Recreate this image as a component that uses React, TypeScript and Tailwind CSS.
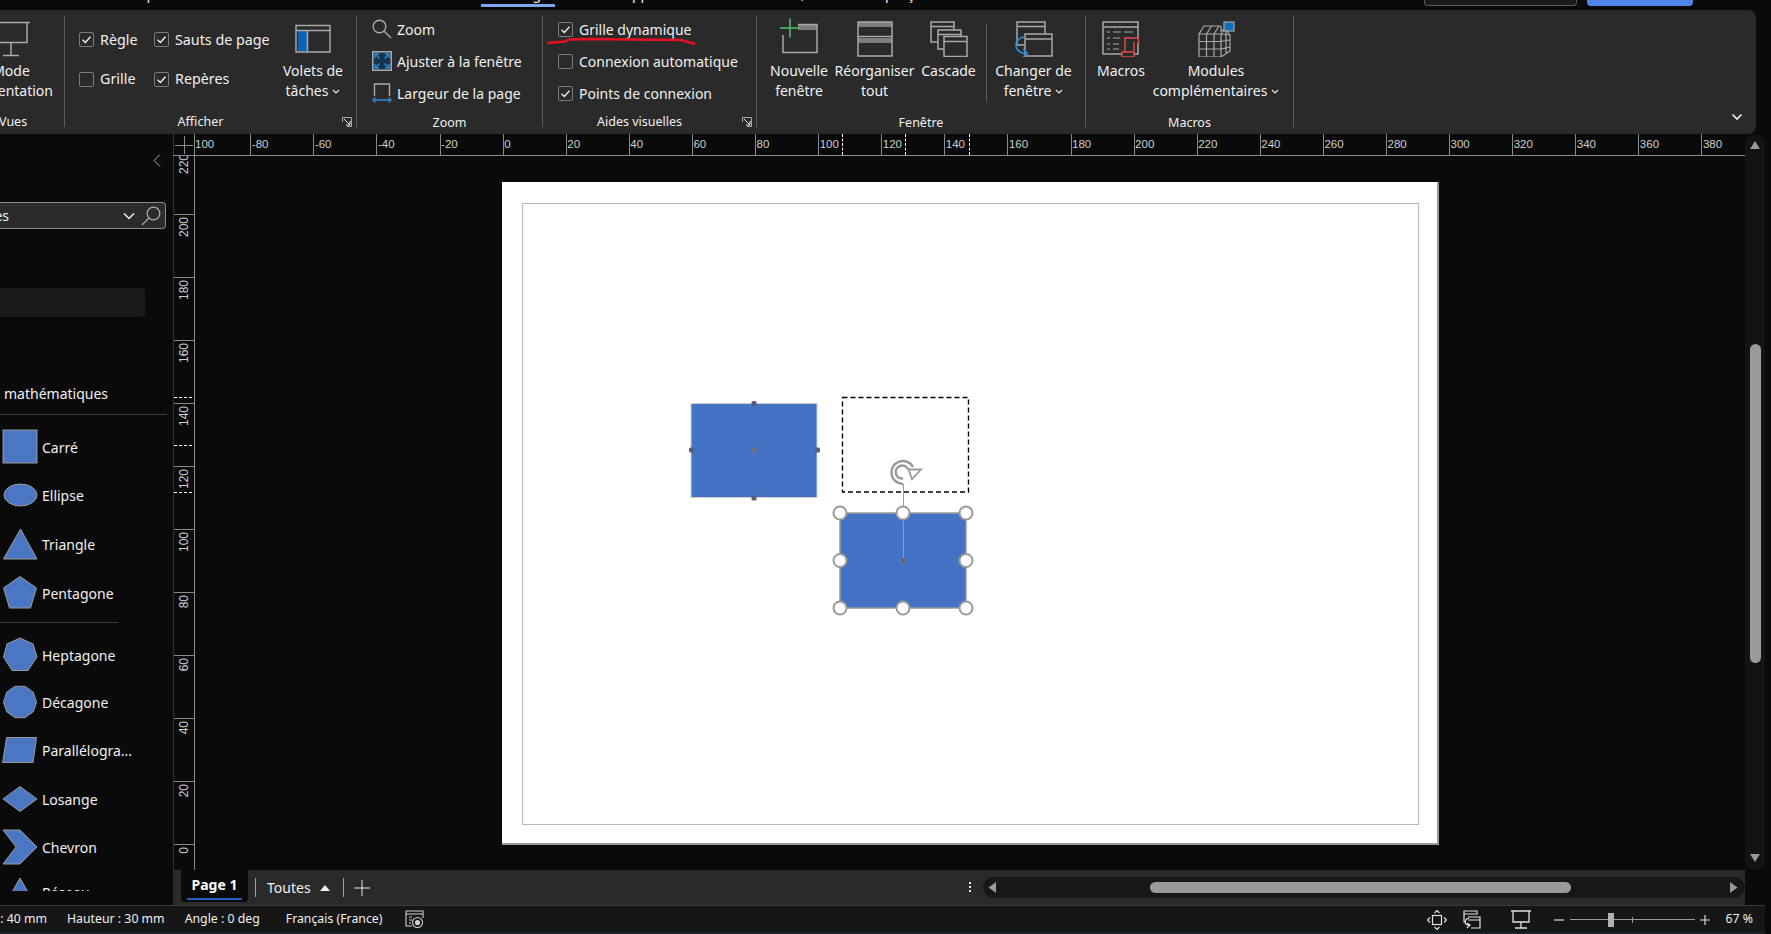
import React from 'react';

const GREY = '#a9a9a9';
const BLUE = '#2f8ad6';

const Chevron = () => (
  <svg width="8" height="5" viewBox="0 0 8 5" className="inline-block ml-[4px] mb-[2px]">
    <path d="M1 1l3 3 3-3" fill="none" stroke="#e8e8e8" strokeWidth="1.2" />
  </svg>
);

const Check = ({ on }: { on: boolean }) => (
  <div className="w-[15px] h-[15px] flex-none rounded-[2px] border border-[#7c7c7c] flex items-center justify-center">
    {on && (
      <svg width="11" height="11" viewBox="0 0 11 11">
        <path d="M1.5 5.8l2.8 2.6 5.2-5.6" fill="none" stroke="#f2f2f2" strokeWidth="1.4" />
      </svg>
    )}
  </div>
);

const CheckRow = ({ on, label }: { on: boolean; label: string }) => (
  <div className="flex items-center gap-[6px] whitespace-nowrap">
    <Check on={on} />
    <span>{label}</span>
  </div>
);

const Launcher = () => (
  <svg width="10" height="10" viewBox="0 0 10 10" className="absolute right-[4px] bottom-[0px]">
    <path d="M.5 5V.5H9.5V9.5H5" fill="none" stroke={GREY} strokeWidth="1" />
    <path d="M2 2l6 6M8 4v4H4" fill="none" stroke="#e8e8e8" strokeWidth="1" />
  </svg>
);

const Group = ({ width, label, launcher, labelClass, children }: { width: string; label: string; launcher?: boolean; labelClass?: string; children: React.ReactNode }) => (
  <div className={`${width} relative flex-none flex flex-col h-[111px] mt-[6px] border-r border-[#5c5c5c]`}>
    <div className="h-[99px] flex">{children}</div>
    <div className={`h-[12px] leading-[14px] text-[12.5px] text-center whitespace-nowrap ${labelClass ?? ''}`}>{label}</div>
    {launcher && <Launcher />}
  </div>
);

const BigButton = ({ width, icon, lines, caret }: { width: string; icon: React.ReactNode; lines: string[]; caret?: boolean }) => (
  <div className={`${width} flex-none flex flex-col items-center`}>
    <div className="h-[45px] flex items-center justify-center">{icon}</div>
    {lines.map((l, i) => (
      <div key={l} className="h-[20px] leading-[20px] whitespace-nowrap">
        {l}
        {caret && i === lines.length - 1 && <Chevron />}
      </div>
    ))}
  </div>
);

const ModeIcon = () => (
  <svg width="38" height="36" viewBox="0 0 38 36" fill="none" stroke={GREY} strokeWidth="1.5">
    <path d="M0 1.5H38M35 1.5V21.5H0M19 21.5V34M11 34.5H27" />
  </svg>
);

const PanesIcon = () => (
  <svg width="36" height="36" viewBox="0 0 36 36" fill="none">
    <rect x="3" y="10" width="9" height="20" fill="#0f62b5" />
    <path d="M1 4.5H35V31H1ZM1 9.5H35M12.5 9.5V31" stroke={GREY} strokeWidth="1.5" />
  </svg>
);

const SearchIcon = () => (
  <svg width="20" height="20" viewBox="0 0 20 20" fill="none" stroke={GREY} strokeWidth="1.4">
    <circle cx="7.5" cy="7.5" r="6.3" />
    <path d="M12 12l7 7" />
  </svg>
);

const FitIcon = () => (
  <svg width="20" height="20" viewBox="0 0 20 20" fill="none">
    <rect x=".75" y=".75" width="18.5" height="18.5" fill="#17344f" stroke={GREY} strokeWidth="1.5" />
    <path d="M3 3l4.5 4.5M3 7V3h4M17 3l-4.5 4.5M17 7V3h-4M3 17l4.5-4.5M3 13v4h4M17 17l-4.5-4.5M17 13v4h-4" stroke={BLUE} strokeWidth="1.4" />
  </svg>
);

const WidthIcon = () => (
  <svg width="20" height="20" viewBox="0 0 20 20" fill="none">
    <path d="M2.5 13V1H17.5V13" stroke={GREY} strokeWidth="1.4" />
    <path d="M.5 17H19.5M3.5 14.5L1 17l2.5 2.5M16.500 14.500L19 17l-2.500 2.500" stroke={BLUE} strokeWidth="1.3" />
  </svg>
);

const NewWindowIcon = () => (
  <svg width="38" height="36" viewBox="0 0 38 36" fill="none" className="overflow-visible">
    <rect x="18" y="3.500" width="19" height="5.500" fill="#7d7d7d" />
    <path d="M3 14V31.500H37V3.500H18" stroke={GREY} strokeWidth="1.5" />
    <path d="M10 -2.500V16.500M0 7H19" stroke="#4fc36b" strokeWidth="1.5" />
  </svg>
);

const ArrangeIcon = () => (
  <svg width="36" height="36" viewBox="0 0 36 36" fill="none">
    <rect x="1" y="1" width="34" height="5" fill="#7d7d7d" />
    <rect x="1" y="17" width="34" height="5" fill="#7d7d7d" />
    <path d="M1 1H35V35H1ZM1 15.500H35" stroke={GREY} strokeWidth="1.5" />
  </svg>
);

const CascadeIcon = () => (
  <svg width="38" height="36" viewBox="0 0 38 36" fill="none" stroke={GREY} strokeWidth="1.5">
    <path d="M1 1H24V21H1ZM1 5.500H24" fill="#2a2a2a" />
    <path d="M8 9H31V28H8ZM8 13.500H31" fill="#2a2a2a" />
    <path d="M14 15.500H37V35.500H14ZM14 20.500H37" fill="#2a2a2a" />
  </svg>
);

const SwitchIcon = () => (
  <svg width="38" height="36" viewBox="0 0 38 36" fill="none">
    <path d="M2 1H30V24H2ZM2 5.500H30" stroke={GREY} strokeWidth="1.5" fill="#2a2a2a" />
    <path d="M10 13H37V35H10ZM10 18H37" stroke={GREY} strokeWidth="1.5" fill="#2a2a2a" />
    <path d="M9 16C3 17 -1 22 2 28C4 31 7 32.500 12 32.500M8 28l4.500 4.500L8 36" stroke={BLUE} strokeWidth="1.5" />
  </svg>
);

const MacroIcon = () => (
  <svg width="38" height="36" viewBox="0 0 38 36" fill="none">
    <path d="M1 1H36V33H1ZM1 6H36" stroke={GREY} strokeWidth="1.5" />
    <path d="M5 11h3M11 11h8M22 11h9M5 17h3M11 17h7M5 23h3M11 23h6M5 28h3M11 28h6" stroke={GREY} strokeWidth="1" />
    <path d="M22 17H36L37 22M23 17V31M20 31H32V36H20ZM32 21V31" stroke="#e24b4b" strokeWidth="1.4" fill="#2a2a2a" />
  </svg>
);

const ModulesIcon = () => (
  <svg width="38" height="36" viewBox="0 0 38 36" fill="none" stroke={GREY} strokeWidth="1.2">
    <path d="M2 13H24V36H2ZM2 20.500H24M2 28H24M9.500 13V36M17 13V36" />
    <path d="M2 13l5-8H24M24 36l9-6V14l-9-1M24 13l3-4M9.500 13l5-8M17 13l5-8M24 5v6M33 14l-4-5H24M24 20l9-1M24 28l9-2M29 9V33" />
    <rect x="27" y="1" width="10" height="9" fill="#0f6cbd" />
  </svg>
);

const shapes = [
  { name: 'Carré', mt: 'mt-[10px]', draw: <rect x="1" y="1" width="34" height="33" /> },
  { name: 'Ellipse', mt: 'mt-[4px]', draw: <ellipse cx="18.500" cy="18" rx="16.500" ry="11" /> },
  { name: 'Triangle', mt: 'mt-[5px]', draw: <polygon points="18.500,3 35,33 1.500,33" /> },
  { name: 'Pentagone', mt: 'mt-[5px]', draw: <polygon points="18,1.500 34.500,13 28.500,33 7.500,33 1.500,13" /> },
  { name: 'Heptagone', mt: 'mt-[10px]', draw: <polygon points="18,1 31,7 35,20 26,33.500 10,33.500 1.500,20 5,7" /> },
  { name: 'Décagone', mt: 'mt-[3px]', draw: <polygon points="12.900,2.300 23.100,2.300 31.300,8.300 34.500,18 31.300,27.700 23.100,33.700 12.900,33.700 4.700,27.700 1.500,18 4.700,8.300" /> },
  { name: 'Parallélogra...', mt: 'mt-[4px]', draw: <polygon points="4.600,5.500 34.500,5.500 31,30.500 .6,30.500" /> },
  { name: 'Losange', mt: 'mt-[5px]', draw: <polygon points="1,18 18,5.500 35,18 18,30.500" /> },
  { name: 'Chevron', mt: 'mt-[4px]', draw: <polygon points="1,1 18,1 35,18 18,35 1,35 14,18" /> },
  { name: 'Réseau', mt: 'mt-[1px]', draw: <polygon points="18,4 35,34 1,34" /> },
];

const hLabels = ['-80', '-60', '-40', '-20', '0', '20', '40', '60', '80', '100', '120', '140', '160', '180', '200', '220', '240', '260', '280', '300', '320', '340', '360', '380'];
const vLabels = ['200', '180', '160', '140', '120', '100', '80', '60', '40', '20'];
const handles = [
  [840, 513], [903, 513], [966, 513], [840, 560.5], [966, 560.5], [840, 608], [903, 608], [966, 608],
];
const pins = [
  [754, 403.5], [691.5, 450], [817.5, 450], [754, 498],
];

const VLabel = ({ children }: { children: string }) => (
  <span className="[writing-mode:vertical-rl] rotate-180 mt-[2px] text-[12px] leading-[12px] font-['Liberation_Sans',sans-serif] text-[#cfcfcf]">{children}</span>
);

const Triangle = ({ dir }: { dir: 'up' | 'down' | 'left' | 'right' }) => (
  <>
    {dir === 'up' && <svg width="12" height="10" viewBox="0 0 12 10"><path d="M6 1l5 8H1z" fill="#9a9a9a" /></svg>}
    {dir === 'down' && <svg width="12" height="10" viewBox="0 0 12 10"><path d="M6 9l5-8H1z" fill="#9a9a9a" /></svg>}
    {dir === 'left' && <svg width="8" height="11" viewBox="0 0 8 11"><path d="M.5 5.500L8 0v11z" fill="#9a9a9a" /></svg>}
    {dir === 'right' && <svg width="8" height="11" viewBox="0 0 8 11"><path d="M7.500 5.500L0 0v11z" fill="#9a9a9a" /></svg>}
  </>
);

export default function App() {
  return (
    <div className="w-[1771px] h-[934px] overflow-hidden bg-[#0a0a0a] text-[#f0f0f0] text-[14px] font-['Noto_Sans',sans-serif]">
      {/* only the bottoms of the tab labels are visible */}
      <div className="h-[10px] flex items-start overflow-hidden">
        <span className="ml-[126px] -mt-[14px] leading-[16px] w-[355px] flex-none">Disposition</span>
        <div className="relative w-[74px] flex-none">
          <div className="-mt-[14px] leading-[16px] text-center">Affichage</div>
          <div className="absolute top-[4px] left-0 right-0 h-[3px] bg-[#7ba7ee]" />
        </div>
        <span className="ml-[68px] -mt-[14px] leading-[16px] w-[110px] flex-none">Applications</span>
        <span className="ml-[20px] -mt-[14px] leading-[16px] w-[100px] flex-none">Macros,</span>
        <span className="ml-[23px] -mt-[14px] leading-[16px] w-[100px] flex-none">Aperçu</span>
        <div className="ml-auto w-[153px] h-[6px] rounded-b-[4px] border border-t-0 border-[#5a5a5a] bg-[#1a1a1a]" />
        <div className="ml-[10px] mr-[78px] w-[106px] h-[6px] rounded-b-[4px] bg-[#4f85e8]" />
      </div>

      {/* ribbon */}
      <div className="relative w-[1756px] h-[124px] bg-[#2a2a2a] rounded-r-[8px] flex overflow-hidden">
        <Group width="w-[65px]" label="Vues" labelClass="w-[20px] -ml-[1px]">
          <div className="-ml-[29px]">
            <BigButton width="w-[80px]" icon={<ModeIcon />} lines={['Mode', 'présentation']} />
          </div>
        </Group>

        <Group width="w-[292px]" label="Afficher" launcher labelClass="pr-[20px]">
          <div className="ml-[14px] w-[198px] pt-[4px] grid grid-cols-[75px_1fr] grid-rows-[39px_40px] items-center text-[14.300px]">
            <CheckRow on label="Règle" />
            <CheckRow on label="Sauts de page" />
            <CheckRow on={false} label="Grille" />
            <CheckRow on label="Repères" />
          </div>
          <BigButton width="w-[72px]" icon={<PanesIcon />} lines={['Volets de', 'tâches']} caret />
        </Group>

        <Group width="w-[186px]" label="Zoom" labelClass="pt-[1px]">
          <div className="ml-[15px] -mt-[1px] flex flex-col gap-[4px] whitespace-nowrap">
            <div className="h-[28px] flex items-center gap-[5px]"><SearchIcon /><span>Zoom</span></div>
            <div className="h-[28px] flex items-center gap-[5px]"><FitIcon /><span>Ajuster à la fenêtre</span></div>
            <div className="h-[28px] flex items-center gap-[5px]"><WidthIcon /><span>Largeur de la page</span></div>
          </div>
        </Group>

        <Group width="w-[214px]" label="Aides visuelles" launcher labelClass="pr-[20px]">
          <div className="ml-[15px] -mt-[1px] flex flex-col gap-[4px]">
            <div className="h-[28px] flex items-center"><CheckRow on label="Grille dynamique" /></div>
            <div className="h-[28px] flex items-center"><CheckRow on={false} label="Connexion automatique" /></div>
            <div className="h-[28px] flex items-center"><CheckRow on label="Points de connexion" /></div>
          </div>
        </Group>

        <Group width="w-[329px]" label="Fenêtre" labelClass="pt-[1px]">
          <BigButton width="w-[84px]" icon={<NewWindowIcon />} lines={['Nouvelle', 'fenêtre']} />
          <BigButton width="w-[67px]" icon={<ArrangeIcon />} lines={['Réorganiser', 'tout']} />
          <BigButton width="w-[78px] pl-[3px]" icon={<CascadeIcon />} lines={['Cascade']} />
          <div className="w-px h-[79px] mt-[7px] bg-[#5c5c5c] flex-none" />
          <BigButton width="w-[93px]" icon={<SwitchIcon />} lines={['Changer de', 'fenêtre']} caret />
        </Group>

        <Group width="w-[208px]" label="Macros" labelClass="pt-[1px]">
          <BigButton width="w-[70px]" icon={<MacroIcon />} lines={['Macros']} />
          <BigButton width="w-[120px]" icon={<ModulesIcon />} lines={['Modules', 'complémentaires']} caret />
        </Group>

        <svg width="12" height="8" viewBox="0 0 12 8" className="absolute left-[1731px] top-[103px]">
          <path d="M1.500 1.500L6 6l4.500-4.500" fill="none" stroke="#f0f0f0" strokeWidth="1.600" />
        </svg>
        {/* red hand-drawn underline */}
        <svg width="150" height="12" viewBox="0 0 150 12" className="absolute left-[547px] top-[25px]">
          <path d="M0 8L18 6.500L22 4.500L48 4L80 4.500L134 5L148 9" fill="none" stroke="#e81123" strokeWidth="2.500" />
        </svg>
      </div>

      <div className="w-[1765px] h-[771px] flex">
        {/* stencil panel */}
        <div className="w-[173px] flex-none flex flex-col overflow-hidden">
          <svg width="8" height="13" viewBox="0 0 8 13" className="mt-[20px] ml-[153px] flex-none">
            <path d="M7 .5L1 6.500l6 6" fill="none" stroke={GREY} strokeWidth="1" />
          </svg>
          <div className="mt-[35px] w-[166px] h-[27px] flex-none flex items-center rounded-r-[4px] border border-l-0 border-[#8a8a8a] bg-[#2b2b2b]">
            <div className="w-[9px] flex justify-end overflow-hidden"><span>Formes</span></div>
            <svg width="12" height="8" viewBox="0 0 12 8" className="ml-[114px]">
              <path d="M1 1.500L6 6.500l5-5" fill="none" stroke="#f0f0f0" strokeWidth="1.500" />
            </svg>
            <svg width="20" height="20" viewBox="0 0 20 20" className="ml-[6px]" fill="none" stroke={GREY} strokeWidth="1.300">
              <circle cx="12.500" cy="7.500" r="6.300" />
              <path d="M8 12l-7 7" />
            </svg>
          </div>
          <div className="mt-[59px] w-[145px] h-[29px] flex-none bg-[#1a1a1a] rounded-r-[3px]" />
          <div className="mt-[67px] ml-[4px] h-[20px] leading-[20px] flex-none">mathématiques</div>
          <div className="mt-[10px] w-[167px] h-px flex-none bg-[#3c3c3c]" />
          <div className="h-[476px] flex-none overflow-hidden">
            {shapes.map((s, i) => (
              <React.Fragment key={s.name}>
                {i === 4 && <div className="mt-[7px] w-[118px] h-px bg-[#3c3c3c]" />}
                <div className={`${s.mt} h-[44px] pl-[2px] flex items-center gap-[4px]`}>
                  <svg width="36" height="36" viewBox="0 0 36 36" fill="#4a76c4" stroke="#9a9a9a" strokeWidth="1" className="flex-none">{s.draw}</svg>
                  <span className="whitespace-nowrap">{s.name}</span>
                </div>
              </React.Fragment>
            ))}
          </div>
        </div>

        <div className="w-[1572px] flex-none flex flex-col">
          {/* horizontal ruler */}
          <div className="h-[22px] flex-none flex border-b border-[#8a8a8a]">
            <div className="w-[22px] flex-none border-l border-r border-l-[#333333] border-r-[#8a8a8a] flex items-center justify-center">
              <svg width="18" height="19" viewBox="0 0 18 19"><path d="M0 10.500H18M9.500 1V19" stroke="#8a8a8a" strokeWidth="1" /></svg>
            </div>
            <div className="relative flex-1 flex overflow-hidden font-['Liberation_Sans',sans-serif] text-[11.500px] text-[#cfcfcf]">
              <div className="w-[55.300px] flex-none leading-[20px]">100</div>
              {hLabels.map((l) => (
                <div key={l} className="w-[63.100px] flex-none border-l border-[#8a8a8a] pl-[0.500px] leading-[20px]">{l}</div>
              ))}
              <div className="absolute left-[647px] top-0 h-full border-l border-dashed border-white" />
              <div className="absolute left-[710px] top-0 h-full border-l border-dashed border-white" />
              <div className="absolute left-[774px] top-0 h-full border-l border-dashed border-white" />
            </div>
          </div>

          <div className="flex-1 flex min-h-0">
            {/* vertical ruler */}
            <div className="relative w-[22px] flex-none flex flex-col border-l border-r border-l-[#333333] border-r-[#8a8a8a]">
              <div className="h-[58px] flex-none flex justify-center items-start overflow-hidden"><div className="-mt-[4px] flex items-start"><VLabel>220</VLabel></div></div>
              {vLabels.map((l) => (
                <div key={l} className="h-[63px] flex-none border-t border-[#8a8a8a] flex justify-center items-start"><VLabel>{l}</VLabel></div>
              ))}
              <div className="h-[25px] flex-none border-t border-[#8a8a8a] flex justify-center items-start"><VLabel>0</VLabel></div>
              <div className="absolute left-0 top-[241px] w-[18px] border-t border-dashed border-white" />
              <div className="absolute left-0 top-[289px] w-[18px] border-t border-dashed border-white" />
              <div className="absolute left-0 top-[336px] w-[18px] border-t border-dashed border-white" />
            </div>

            {/* drawing page */}
            <div className="flex-1 overflow-hidden">
              <div className="relative ml-[307px] mt-[26px] w-[937px] h-[663px] bg-white border-r-2 border-b-2 border-[#9a9a9a] pt-[21px] pl-[20px]">
                <div className="w-[897px] h-[622px] border border-[#b8b8b8]" />
                <svg width="937" height="663" viewBox="502 182 937 663" className="absolute left-0 top-0">
                  <rect x="691" y="403.500" width="126" height="94" fill="#4472c4" stroke="#cfcfcf" strokeWidth="1" />
                  {pins.map(([x, y]) => (
                    <rect key={`${x}-${y}`} x={x - 2.5} y={y - 2.5} width="5" height="5" rx="1.500" fill="#5c5c72" />
                  ))}
                  <rect x="751.500" y="447.500" width="5" height="5" fill="#6e6e7c" />
                  <rect x="842.500" y="397.500" width="126" height="94.500" fill="none" stroke="#000000" strokeWidth="1.400" strokeDasharray="5 3" />
                  <rect x="840" y="513" width="126" height="95" fill="#4472c4" stroke="#9a9a9a" strokeWidth="1.500" />
                  <path d="M903.500 484V560" stroke="#9a9a9a" strokeWidth="1" />
                  <rect x="901" y="558" width="5" height="5" rx="1" fill="#5c5c72" stroke="#9a9a9a" strokeWidth=".5" />
                  {handles.map(([x, y]) => (
                    <circle key={`${x}-${y}`} cx={x} cy={y} r="6.500" fill="white" stroke="#9a9a9a" strokeWidth="2" />
                  ))}
                  <path d="M913 467A11.500 11.500 0 1 0 903 484M908 469A6.500 6.500 0 1 0 903 478.500" fill="none" stroke="#9a9a9a" strokeWidth="2.500" />
                  <path d="M908.500 469.500H921L912 479L908.500 469.500Z" fill="white" stroke="#9a9a9a" strokeWidth="1.800" />
                </svg>
              </div>
            </div>
          </div>

          {/* page tabs */}
          <div className="h-[35px] flex-none flex items-start bg-[#2a2a2a]">
            <div className="ml-[8px] w-[67px] h-[32px] flex-none bg-[#0a0a0a] rounded-b-[4px] flex flex-col items-center">
              <div className="h-[28px] leading-[30px] font-bold text-white text-[14px]">Page 1</div>
              <div className="w-[55px] h-[2px] bg-[#1f5fc4]" />
            </div>
            <div className="ml-[7px] mt-[8px] w-px h-[19px] bg-[#a0a0a0] flex-none" />
            <div className="ml-[11px] h-[35px] leading-[35px] flex-none">Toutes</div>
            <svg width="10" height="6" viewBox="0 0 10 6" className="ml-[9px] mt-[15px] flex-none"><path d="M5 0l5 6H0z" fill="#f0f0f0" /></svg>
            <div className="ml-[13px] mt-[8px] w-px h-[19px] bg-[#a0a0a0] flex-none" />
            <svg width="16" height="16" viewBox="0 0 16 16" className="ml-[10px] mt-[10px] flex-none"><path d="M0 8H16M8 0V16" stroke="#e8e8e8" strokeWidth="1" /></svg>
            <div className="ml-auto mt-[12px] flex flex-col gap-[2px] flex-none">
              <div className="w-[2px] h-[2px] bg-[#e8e8e8]" />
              <div className="w-[2px] h-[2px] bg-[#e8e8e8]" />
              <div className="w-[2px] h-[2px] bg-[#e8e8e8]" />
            </div>
            <div className="ml-[12px] mt-[7px] w-[762px] h-[21px] flex-none rounded-full bg-[#171717] flex items-center pl-[5px] pr-[7px]">
              <Triangle dir="left" />
              <div className="ml-[154px] w-[421px] h-[11px] rounded-full bg-[#9a9a9a]" />
              <div className="ml-auto flex"><Triangle dir="right" /></div>
            </div>
          </div>
        </div>

        {/* vertical scrollbar */}
        <div className="w-[20px] flex-none flex flex-col">
          <div className="h-[736px] w-[20px] rounded-t-full rounded-b-full bg-[#131313] flex flex-col items-center">
            <div className="mt-[6px] flex"><Triangle dir="up" /></div>
            <div className="mt-[194px] w-[11px] h-[319px] rounded-full bg-[#9a9a9a]" />
            <div className="mt-auto mb-[7px] flex"><Triangle dir="down" /></div>
          </div>
        </div>
      </div>

      {/* status bar */}
      <div className="w-[1765px] h-[27px] pt-[1px] border-t border-[#3a3a3a] bg-[#161616] flex items-center text-[12.300px] whitespace-nowrap">
        <div className="w-[47px] flex justify-end overflow-hidden flex-none"><span>Largeur : 40 mm</span></div>
        <span className="ml-[20px]">Hauteur : 30 mm</span>
        <span className="ml-[20px]">Angle : 0 deg</span>
        <span className="ml-[26px]">Français (France)</span>
        <svg width="19" height="19" viewBox="0 0 19 19" className="ml-[23px] flex-none" fill="none" stroke="#d0d0d0" strokeWidth="1.100">
          <path d="M1 1H18V8M1 1V16H7M1 4H18M4 7H7M4 10H7M4 13H6" />
          <circle cx="12.500" cy="12.500" r="5" />
          <circle cx="12.500" cy="12.500" r="2" fill="#d0d0d0" />
        </svg>
        <svg width="20" height="20" viewBox="0 0 20 20" className="ml-auto flex-none" fill="none" stroke="#e0e0e0" strokeWidth="1.200">
          <rect x="5.500" y="5.500" width="9" height="9" />
          <path d="M7.500 3L10 .5 12.500 3M7.500 17L10 19.500 12.500 17M3 7.500L.5 10 3 12.500M17 7.500L19.500 10 17 12.500" />
        </svg>
        <svg width="19" height="19" viewBox="0 0 19 19" className="ml-[15px] flex-none" fill="none" stroke="#e0e0e0" strokeWidth="1.200">
          <path d="M2 1H15V4H2ZM2 4V12H4M6 7H18V18H9M6 10H18" />
          <path d="M7 8C2 9 2 15 7 15M5 13l3 2-3 3" />
        </svg>
        <svg width="20" height="19" viewBox="0 0 20 19" className="ml-[30px] flex-none" fill="none" stroke="#e0e0e0" strokeWidth="1.300">
          <path d="M0 1H20M2 1V12H18V1M10 12V18M4 18H16" />
        </svg>
        <svg width="10" height="2" viewBox="0 0 10 2" className="ml-[23px] flex-none"><path d="M0 1H10" stroke="#e0e0e0" strokeWidth="1.200" /></svg>
        <div className="relative ml-[6px] w-[125px] h-[14px] flex-none flex items-center">
          <div className="w-full h-px bg-[#9a9a9a]" />
          <div className="absolute left-[62px] top-[4px] w-px h-[6px] bg-[#9a9a9a]" />
          <div className="absolute left-[38px] top-0 w-[6px] h-[14px] bg-[#b0b0b0]" />
        </div>
        <svg width="10" height="10" viewBox="0 0 10 10" className="ml-[5px] flex-none"><path d="M0 5H10M5 0V10" stroke="#e0e0e0" strokeWidth="1.200" /></svg>
        <span className="ml-[16px] mr-[12px]">67 %</span>
      </div>
      <div className="w-[1765px] h-[3px] bg-[#1b2128]" />
    </div>
  );
}
